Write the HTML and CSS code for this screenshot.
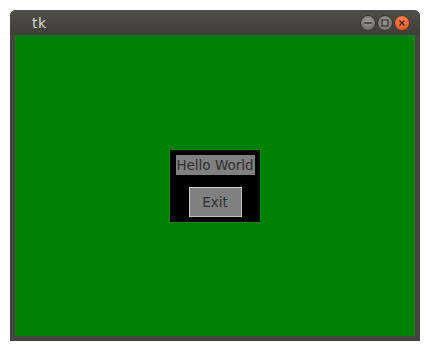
FILE: index.html
```html
<!DOCTYPE html>
<html lang="en">
<head>
  <meta charset="UTF-8" />
  <title>tk</title>
  <link rel="stylesheet" href="styles.css">
</head>
<body>
  <div class="window">
    <div class="titlebar">
      <span class="title">tk</span>
      <div class="controls">
        <span class="ctl ctl-min">
          <svg width="10" height="10" viewBox="0 0 10 10"><path d="M1.5 5h7" stroke="#2e2e2c" stroke-width="1.3"/></svg>
        </span>
        <span class="ctl ctl-max">
          <svg width="10" height="10" viewBox="0 0 10 10"><rect x="2" y="2" width="6" height="6" fill="none" stroke="#2e2e2c" stroke-width="1.1"/></svg>
        </span>
        <span class="ctl ctl-close">
          <svg width="10" height="10" viewBox="0 0 10 10"><path d="M2.5 2.5l5 5M7.5 2.5l-5 5" stroke="#4a1d0c" stroke-width="1.3"/></svg>
        </span>
      </div>
    </div>
    <div class="content">
      <div class="frame">
        <div class="label">Hello World</div>
        <button class="exit-btn">Exit</button>
      </div>
    </div>
  </div>
</body>
</html>
```

FILE: styles.css
```css
* {
  margin: 0;
  padding: 0;
  box-sizing: border-box;
}

body {
  background-color: #ffffff;
  padding: 10px;
  font-family: "DejaVu Sans", sans-serif;
}

/* Window chrome */
.window {
  width: 410px;
  height: 331px;
  background-color: #454442;
  border-radius: 6px 6px 0 0;
  display: flex;
  flex-direction: column;
}

.titlebar {
  height: 25px;
  display: flex;
  align-items: center;
  justify-content: space-between;
  padding: 1px 10px 0 22px;
  background: linear-gradient(#4f4e4b, #3f3e3b);
  border-radius: 6px 6px 0 0;
}

.title {
  color: #dcd8cf;
  font-size: 14px;
  letter-spacing: 0.5px;
}

.controls {
  display: flex;
  gap: 1px;
}

.ctl {
  width: 16px;
  height: 16px;
  border-radius: 50%;
  display: flex;
  align-items: center;
  justify-content: center;
  background: radial-gradient(circle at 50% 35%, #9a9994, #6a6965);
  border: 1px solid #363532;
}

.ctl-close {
  background: radial-gradient(circle at 50% 35%, #f68b5c, #e04e1d);
  border-color: #6e3420;
}

/* Green client area */
.content {
  flex: 1;
  margin: 0 5px 5px 5px;
  background-color: #008000;
  display: flex;
  align-items: center;
  justify-content: center;
}

.frame {
  background-color: #000000;
  width: 90px;
  padding: 5px;
  display: flex;
  flex-direction: column;
  align-items: center;
}

.label {
  background-color: #808080;
  color: #2f2f2f;
  font-size: 13.5px;
  line-height: 20px;
  width: 79px;
  text-align: center;
  white-space: nowrap;
}

.exit-btn {
  margin-top: 12px;
  width: 53px;
  height: 30px;
  background-color: #808080;
  color: #2f2f2f;
  font-family: "DejaVu Sans", sans-serif;
  font-size: 13.5px;
  border: 1px solid #d0d0d0;
  border-right-color: #bdbdbd;
  border-bottom-color: #bdbdbd;
}
```
